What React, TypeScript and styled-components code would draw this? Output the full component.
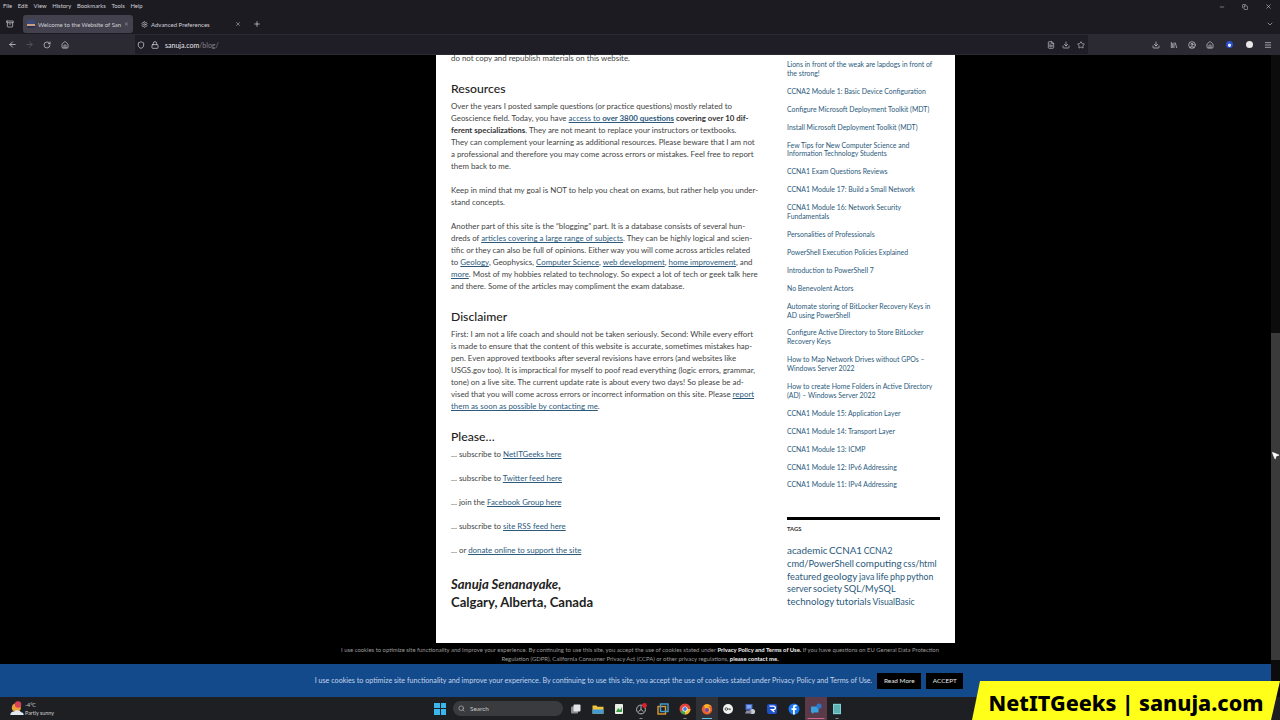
import type { FC, ReactNode } from "react";
import styled, { createGlobalStyle } from "styled-components";
import {
  Archive,
  ArrowLeft,
  ArrowRight,
  ChevronDown,
  Copy,
  Download,
  FileText,
  Home,
  Library,
  Lock,
  Menu,
  Minus,
  MousePointer2,
  Plus,
  RotateCw,
  Search,
  Settings,
  Shield,
  Star,
  UserCircle,
  X,
} from "lucide-react";

const GlobalStyle = createGlobalStyle`
  html, body {
    margin: 0;
    height: 720px;
    overflow: hidden;
    background: #000;
  }
  * {
    box-sizing: border-box;
  }
`;

const Screen = styled.div`
  position: relative;
  width: 1280px;
  height: 720px;
  display: flex;
  flex-direction: column;
  overflow: hidden;
  font-family: "Lato", "Liberation Sans", sans-serif;
  background: #000;
`;

const Chrome = styled.div`
  height: 55px;
  flex: none;
  display: flex;
  flex-direction: column;
  background: #1c1b22;
  color: #d8d8dc;
`;

const MenuRow = styled.div`
  height: 10px;
  flex: none;
  display: flex;
  align-items: center;
  padding-left: 3px;
  gap: 5.6px;
  font-size: 5.9px;
  color: #cfcfd4;
`;

const WindowButtons = styled.div`
  margin-left: auto;
  display: flex;
  align-items: center;
  gap: 17px;
  padding: 3px 8px 0 0;
`;

const TabRow = styled.div`
  height: 24px;
  flex: none;
  display: flex;
  align-items: center;
  padding-top: 4px;
  font-size: 6px;
`;

const TabsIcon = styled.div`
  width: 23px;
  display: flex;
  justify-content: center;
  padding-right: 3px;
  color: #d8d8dc;
`;

const Tab = styled.div<{ $active?: boolean; $w: number }>`
  height: 18px;
  width: ${({ $w }) => $w}px;
  margin-right: 4px;
  display: flex;
  align-items: center;
  gap: 3px;
  padding: 0 4px 0 4px;
  border-radius: 3px;
  background: ${({ $active }) => ($active ? "#42414d" : "transparent")};
  color: #d0d0d6;
  white-space: nowrap;
`;

const TabTitle = styled.span`
  flex: 1;
`;

const Favicon = styled.span`
  width: 8px;
  height: 8px;
  flex: none;
  border-radius: 1px;
  background: linear-gradient(#3a4a78 0 45%, #c8a080 45% 70%, #2a3050 70%);
`;

const NewTab = styled.div`
  margin-left: 4px;
  display: flex;
  color: #e0e0e4;
`;

const ExpandTabs = styled.div`
  margin-left: auto;
  padding-right: 6px;
  display: flex;
  color: #b8b8c0;
`;

const Toolbar = styled.div`
  flex: 1;
  display: flex;
  align-items: center;
  background: #2b2a33;
  padding: 0 3px 0 4px;
`;

const NavButton = styled.div<{ $dim?: boolean; $w?: number }>`
  width: ${({ $w }) => $w ?? 18}px;
  flex: none;
  display: flex;
  justify-content: center;
  color: ${({ $dim }) => ($dim ? "#5e5d66" : "#d8d8dc")};
`;

const UrlBar = styled.div`
  width: 953px;
  height: 19px;
  flex: none;
  margin: 0 59px 0 61px;
  display: flex;
  align-items: center;
  gap: 6px;
  padding: 0 3px 0 2px;
  background: #1f1e26;
  font-size: 7px;
  color: #e6e6ea;
`;

const UrlPath = styled.span`
  color: #85848c;
`;

const UrlActions = styled.div`
  margin-left: auto;
  display: flex;
  gap: 7px;
  color: #c8c8cc;
`;

const BlueDot = styled.span`
  width: 7px;
  height: 7px;
  border-radius: 50%;
  background: radial-gradient(circle at 50% 60%, #dfe6ff 0 25%, #2a4fd0 35%);
`;

const WhiteBlob = styled.span`
  width: 7px;
  height: 7px;
  border-radius: 50%;
  background: #e8e8e8;
`;

const Viewport = styled.div`
  position: relative;
  flex: 1;
  display: flex;
  padding-left: 436px;
  overflow: hidden;
  background: #000;
`;

const Card = styled.div`
  width: 519px;
  height: 588px;
  flex: none;
  display: flex;
  gap: 30px;
  padding: 0 15px;
  overflow: hidden;
  background: #fff;
`;

const Article = styled.article`
  width: 306px;
  flex: none;
  font-size: 7.9px;
  line-height: 12px;
  color: #444;
  white-space: nowrap;
`;

const ScrolledLine = styled.p`
  margin: 0 0 15px;
  line-height: 6px;
`;

const Paragraph = styled.p`
  margin: 0 0 12px;
`;

const Heading = styled.h2`
  margin: 0 0 4px;
  padding-top: 5px;
  font-size: 12.2px;
  line-height: 15px;
  font-weight: 500;
  color: #222;
`;

const A = styled.a`
  color: #2b5a7c;
  text-decoration: underline;
  text-decoration-thickness: 0.5px;
  text-underline-offset: 1px;
`;

const Strong = styled.strong`
  color: #333;
  font-weight: 700;
`;

const Signature = styled.div`
  margin-top: 19px;
  font-size: 13.1px;
  line-height: 18px;
  font-weight: 700;
  color: #222;
`;

const SignatureName = styled.em`
  display: block;
`;

const Sidebar = styled.aside`
  width: 153px;
  flex: none;
  padding-top: 5px;
`;

const PostList = styled.ul`
  list-style: none;
  margin: 0;
  padding: 0;
  display: flex;
  flex-direction: column;
  gap: 8.95px;
`;

const PostItem = styled.li`
  font-size: 6.9px;
  line-height: 8.95px;
  color: #2b5a7c;
  white-space: pre-line;
`;

const TagsRule = styled.div`
  margin-top: 28px;
  height: 3px;
  background: #000;
`;

const TagsTitle = styled.h3`
  margin: 4px 0 11px;
  font-size: 5.8px;
  line-height: 9px;
  font-weight: 700;
  color: #333;
`;

const TagCloud = styled.div`
  color: #2b5a7c;
  white-space: nowrap;
`;

const TagLine = styled.div`
  height: 12.7px;
  font-size: 9px;
  line-height: 12.7px;
`;

const Tag = styled.span<{ $size: number }>`
  font-size: ${({ $size }) => $size}px;
  margin-right: 1.6px;
`;

const Scrollbar = styled.div`
  position: absolute;
  top: 0;
  right: 0;
  bottom: 0;
  width: 9px;
  padding-top: 278px;
  background: #0c0c0c;
`;

const ScrollThumb = styled.div`
  height: 327px;
  background: #3a3a3a;
`;

const CursorMark = styled.div`
  position: absolute;
  left: 1271px;
  top: 396px;
  display: flex;
  color: #fff;
`;

const CookieStack = styled.div`
  position: absolute;
  left: 0;
  right: 9px;
  bottom: 0;
  display: flex;
  flex-direction: column;
`;

const CookieNote = styled.div`
  height: 21px;
  padding: 2px 0 0 9px;
  text-align: center;
  font-size: 5.9px;
  line-height: 9px;
  color: #9a9a9a;
`;

const NoteStrong = styled.b`
  color: #eee;
`;

const CookieBar = styled.div`
  height: 33px;
  display: flex;
  align-items: center;
  justify-content: center;
  gap: 5px;
  padding-left: 7px;
  background: #134a8c;
  font-size: 7.17px;
  color: #c4d4e8;
`;

const CookieButton = styled.button<{ $w: number }>`
  width: ${({ $w }) => $w}px;
  height: 16px;
  padding: 0;
  border: 0;
  background: #000;
  color: #e8e8e8;
  font-family: inherit;
  font-size: 6.4px;
`;

const Taskbar = styled.div`
  height: 23px;
  flex: none;
  display: flex;
  align-items: center;
  background: #1e1f22;
  color: #ddd;
`;

const Weather = styled.div`
  width: 434px;
  flex: none;
  display: flex;
  align-items: center;
  gap: 0;
  padding-left: 9px;
`;

const WeatherText = styled.div`
  font-size: 5.4px;
  line-height: 8px;
  color: #cfcfcf;
`;

const TaskIcons = styled.div`
  display: flex;
  align-items: center;
`;

const WinLogo = styled.div`
  width: 12px;
  height: 12px;
  display: grid;
  grid-template-columns: 1fr 1fr;
  gap: 1px;
`;

const WinPane = styled.span`
  background: #39b6ee;
`;

const SearchPill = styled.div`
  width: 110px;
  height: 15px;
  margin: 0 2px 0 7px;
  display: flex;
  align-items: center;
  gap: 5px;
  padding-left: 5px;
  border-radius: 8px;
  background: #3a3b3e;
  font-size: 6.4px;
  color: #c8c8c8;
`;

const TaskSlot = styled.div<{ $tone?: "plain" | "pink" }>`
  position: relative;
  width: 21.8px;
  height: 23px;
  display: flex;
  align-items: center;
  justify-content: center;
  background: ${({ $tone }) =>
    $tone === "plain" ? "#303136" : $tone === "pink" ? "#5a3a48" : "transparent"};
`;

const TaskMark = styled.span<{ $color: string; $w: number }>`
  position: absolute;
  left: 50%;
  bottom: 1px;
  width: ${({ $w }) => $w}px;
  height: 1px;
  transform: translateX(-50%);
  background: ${({ $color }) => $color};
`;

const Badge = styled.div`
  position: absolute;
  right: 0;
  bottom: 0;
  width: 308px;
  height: 39px;
  display: flex;
  align-items: center;
  justify-content: center;
  padding-top: 3px;
  background: #ffff1a;
  clip-path: polygon(8px 0, 100% 0, calc(100% - 9px) 100%, 0 100%);
  font-family: "Noto Sans", "DejaVu Sans", sans-serif;
  font-size: 21.5px;
  font-weight: 800;
  color: #000;
  white-space: nowrap;
`;

const posts = [
  "Lions in front of the weak are lapdogs in front of\nthe strong!",
  "CCNA2 Module 1: Basic Device Configuration",
  "Configure Microsoft Deployment Toolkit (MDT)",
  "Install Microsoft Deployment Toolkit (MDT)",
  "Few Tips for New Computer Science and\nInformation Technology Students",
  "CCNA1 Exam Questions Reviews",
  "CCNA1 Module 17: Build a Small Network",
  "CCNA1 Module 16: Network Security\nFundamentals",
  "Personalities of Professionals",
  "PowerShell Execution Policies Explained",
  "Introduction to PowerShell 7",
  "No Benevolent Actors",
  "Automate storing of BitLocker Recovery Keys in\nAD using PowerShell",
  "Configure Active Directory to Store BitLocker\nRecovery Keys",
  "How to Map Network Drives without GPOs –\nWindows Server 2022",
  "How to create Home Folders in Active Directory\n(AD) – Windows Server 2022",
  "CCNA1 Module 15: Application Layer",
  "CCNA1 Module 14: Transport Layer",
  "CCNA1 Module 13: ICMP",
  "CCNA1 Module 12: IPv6 Addressing",
  "CCNA1 Module 11: IPv4 Addressing",
];

const tagLines: [string, number][][] = [
  [["academic", 9.9], ["CCNA1", 9.9], ["CCNA2", 8.6]],
  [["cmd/PowerShell", 9.3], ["computing", 9.9], ["css/html", 8.9]],
  [["featured", 9.3], ["geology", 10], ["java", 8.9], ["life", 9.3], ["php", 8.9], ["python", 8.6]],
  [["server", 9], ["society", 9.3], ["SQL/MySQL", 9.3]],
  [["technology", 9.7], ["tutorials", 9.7], ["VisualBasic", 8.6]],
];

// small hand drawn taskbar apps, left to right
const Glyph: FC<{ children: ReactNode; size?: number }> = ({ children, size = 12 }) => (
  <svg width={size} height={size} viewBox="0 0 12 12">
    {children}
  </svg>
);

const taskApps: { glyph: ReactNode; tone?: "plain" | "pink"; mark?: [string, number] }[] = [
  {
    glyph: (
      <Glyph>
        <rect x="1" y="3.5" width="7" height="7" rx="1" fill="#8a8c90" />
        <rect x="3.5" y="1.5" width="7" height="7" rx="1" fill="#e4e4e6" />
      </Glyph>
    ),
  },
  {
    glyph: (
      <Glyph>
        <path d="M0.5 2.5h4l1 1.2h6v7h-11z" fill="#f2c33c" />
        <rect x="0.5" y="6.5" width="11" height="4.2" fill="#3f9ad6" />
      </Glyph>
    ),
  },
  {
    glyph: (
      <Glyph>
        <rect x="2" y="1" width="8" height="10" rx="0.8" fill="#e8efe6" />
        <path d="M3 9l2-4 2 2 2-3v5z" fill="#3f9a48" />
      </Glyph>
    ),
  },
  {
    mark: ["#888", 3],
    glyph: (
      <Glyph>
        <circle cx="6" cy="6.5" r="4.4" fill="none" stroke="#c8c8c8" strokeWidth="0.9" />
        <path d="M6 6.5L3.5 8.5M6 6.5l2.4 2M6 6.5V3.2" stroke="#c8c8c8" strokeWidth="0.9" />
        <circle cx="9.5" cy="2.5" r="2.4" fill="#e0202c" />
      </Glyph>
    ),
  },
  {
    glyph: (
      <Glyph>
        <rect x="1" y="3.5" width="7.5" height="7.5" fill="none" stroke="#e09a30" strokeWidth="1.4" />
        <rect x="3.5" y="1" width="7.5" height="7.5" fill="none" stroke="#3fa0d8" strokeWidth="1.4" />
      </Glyph>
    ),
  },
  {
    mark: ["#888", 3],
    glyph: (
      <Glyph>
        <circle cx="6" cy="6" r="5.5" fill="#e0463a" />
        <path d="M6 6L1.2 8.8A5.5 5.5 0 0 0 6 11.5z" fill="#3ea650" />
        <path d="M6 6l0 5.5A5.5 5.5 0 0 0 11.5 6z" fill="#f3c030" />
        <circle cx="6" cy="6" r="2.6" fill="#fff" />
        <circle cx="6" cy="6" r="1.9" fill="#3a7de0" />
      </Glyph>
    ),
  },
  {
    tone: "plain",
    mark: ["#5cc4ea", 10],
    glyph: (
      <Glyph>
        <circle cx="6" cy="6.3" r="5.2" fill="#e8612c" />
        <path d="M3 2.5C5 .5 9 .8 10.8 4 9 3 7.5 3.2 6.8 4c2 .3 3 2 2.4 3.8-.8 1.6-3 2-4.4 1C3.6 7.8 3.6 6.5 4 5.6z" fill="#f7b32c" />
        <circle cx="6" cy="7" r="2" fill="#7a3fb8" />
      </Glyph>
    ),
  },
  {
    glyph: (
      <Glyph>
        <circle cx="6" cy="6" r="5" fill="#f2f2f2" />
        <circle cx="4.3" cy="6" r="1.3" fill="none" stroke="#333" strokeWidth="0.8" />
        <path d="M5.6 6h3.2M8 6v1.2" stroke="#333" strokeWidth="0.8" />
      </Glyph>
    ),
  },
  {
    glyph: (
      <Glyph>
        <rect x="1.5" y="1" width="7" height="6" fill="#3b5fc0" />
        <rect x="2.5" y="2" width="5" height="3.6" fill="#7fa6ea" />
        <circle cx="8.5" cy="8.5" r="2.6" fill="#c8ccd4" />
        <path d="M1 10.5l1.5-3h5v3z" fill="#8a90a0" />
      </Glyph>
    ),
  },
  {
    glyph: (
      <Glyph>
        <rect x="1" y="1" width="10" height="10" rx="2" fill="#1e50c8" />
        <path d="M3.5 3.2h4.2a1.7 1.7 0 0 1 0 3.4H5.6l2.8 2.3" fill="none" stroke="#fff" strokeWidth="1.3" />
      </Glyph>
    ),
  },
  {
    glyph: (
      <Glyph>
        <circle cx="6" cy="6" r="5.5" fill="#1877f2" />
        <path d="M6.8 11.5V7h1.5l.3-1.7H6.8V4.3c0-.6.3-.9.9-.9h.9V1.9C8.2 1.8 7.7 1.8 7.2 1.8 5.9 1.8 5 2.6 5 4.1v1.2H3.5V7H5v4.5z" fill="#fff" />
      </Glyph>
    ),
  },
  {
    tone: "pink",
    mark: ["#d06a88", 17],
    glyph: (
      <Glyph>
        <path d="M1 3.5h7.5v6H4L2.2 11V9.5H1z" fill="#3aa0e0" />
        <circle cx="9" cy="3" r="2.6" fill="#2a78c8" />
      </Glyph>
    ),
  },
  {
    mark: ["#888", 3],
    glyph: (
      <Glyph>
        <rect x="2" y="0.8" width="8" height="10.4" fill="#7fd0d0" />
        <path d="M3 3h6M3 5h6M3 7h6M3 9h6" stroke="#2a7a88" strokeWidth="0.7" />
      </Glyph>
    ),
  },
];

const App: FC = () => (
  <Screen>
    <GlobalStyle />
    <Chrome>
      <MenuRow>
        <span>File</span>
        <span>Edit</span>
        <span>View</span>
        <span>History</span>
        <span>Bookmarks</span>
        <span>Tools</span>
        <span>Help</span>
        <WindowButtons>
          <Minus size={6} />
          <Copy size={6} />
          <X size={7} />
        </WindowButtons>
      </MenuRow>
      <TabRow>
        <TabsIcon>
          <Archive size={8} />
        </TabsIcon>
        <Tab $active $w={110}>
          <Favicon />
          <TabTitle>Welcome to the Website of San</TabTitle>
          <X size={6} />
        </Tab>
        <Tab $w={108}>
          <Settings size={7} />
          <TabTitle>Advanced Preferences</TabTitle>
          <X size={6} />
        </Tab>
        <NewTab>
          <Plus size={8} />
        </NewTab>
        <ExpandTabs>
          <ChevronDown size={8} />
        </ExpandTabs>
      </TabRow>
      <Toolbar>
        <NavButton $w={16}>
          <ArrowLeft size={9} />
        </NavButton>
        <NavButton $dim>
          <ArrowRight size={9} />
        </NavButton>
        <NavButton>
          <RotateCw size={8} />
        </NavButton>
        <NavButton>
          <Home size={8} />
        </NavButton>
        <UrlBar>
          <Shield size={8} />
          <Lock size={8} />
          <span>
            sanuja.com<UrlPath>/blog/</UrlPath>
          </span>
          <UrlActions>
            <FileText size={8} />
            <Download size={8} />
            <Star size={8} />
          </UrlActions>
        </UrlBar>
        <NavButton>
          <Download size={8} />
        </NavButton>
        <NavButton>
          <Library size={8} />
        </NavButton>
        <NavButton>
          <UserCircle size={8} />
        </NavButton>
        <NavButton>
          <Home size={8} />
        </NavButton>
        <NavButton $w={20}>
          <BlueDot />
        </NavButton>
        <NavButton $w={20}>
          <WhiteBlob />
        </NavButton>
        <NavButton>
          <Menu size={8} />
        </NavButton>
      </Toolbar>
    </Chrome>

    <Viewport>
      <Card>
        <Article>
          <ScrolledLine>do not copy and republish materials on this website.</ScrolledLine>
          <Heading>Resources</Heading>
          <Paragraph>
            Over the years I posted sample questions (or practice questions) mostly related to
            <br />
            Geoscience field. Today, you have <A>access to <b>over 3800 questions</b></A>{" "}
            <Strong>covering over 10 dif-</Strong>
            <br />
            <Strong>ferent specializations</Strong>. They are not meant to replace your instructors or textbooks.
            <br />
            They can complement your learning as additional resources. Please beware that I am not
            <br />
            a professional and therefore you may come across errors or mistakes. Feel free to report
            <br />
            them back to me.
          </Paragraph>
          <Paragraph>
            Keep in mind that my goal is NOT to help you cheat on exams, but rather help you under-
            <br />
            stand concepts.
          </Paragraph>
          <Paragraph>
            Another part of this site is the “blogging” part. It is a database consists of several hun-
            <br />
            dreds of <A>articles covering a large range of subjects</A>. They can be highly logical and scien-
            <br />
            tific or they can also be full of opinions. Either way you will come across articles related
            <br />
            to <A>Geology</A>, Geophysics, <A>Computer Science</A>, <A>web development</A>, <A>home improvement</A>, and
            <br />
            <A>more</A>. Most of my hobbies related to technology. So expect a lot of tech or geek talk here
            <br />
            and there. Some of the articles may compliment the exam database.
          </Paragraph>
          <Heading>Disclaimer</Heading>
          <Paragraph>
            First: I am not a life coach and should not be taken seriously. Second: While every effort
            <br />
            is made to ensure that the content of this website is accurate, sometimes mistakes hap-
            <br />
            pen. Even approved textbooks after several revisions have errors (and websites like
            <br />
            USGS.gov too). It is impractical for myself to poof read everything (logic errors, grammar,
            <br />
            tone) on a live site. The current update rate is about every two days! So please be ad-
            <br />
            vised that you will come across errors or incorrect information on this site. Please <A>report</A>
            <br />
            <A>them as soon as possible by contacting me</A>.
          </Paragraph>
          <Heading>Please…</Heading>
          <Paragraph>… subscribe to <A>NetITGeeks here</A></Paragraph>
          <Paragraph>… subscribe to <A>Twitter feed here</A></Paragraph>
          <Paragraph>… join the <A>Facebook Group here</A></Paragraph>
          <Paragraph>… subscribe to <A>site RSS feed here</A></Paragraph>
          <Paragraph>… or <A>donate online to support the site</A></Paragraph>
          <Signature>
            <SignatureName>Sanuja Senanayake,</SignatureName>
            Calgary, Alberta, Canada
          </Signature>
        </Article>
        <Sidebar>
          <PostList>
            {posts.map((post) => (
              <PostItem key={post}>{post}</PostItem>
            ))}
          </PostList>
          <TagsRule />
          <TagsTitle>TAGS</TagsTitle>
          <TagCloud>
            {tagLines.map((line) => (
              <TagLine key={line[0][0]}>
                {line.map(([name, size]) => (
                  <Tag key={name} $size={size}>
                    {name}
                  </Tag>
                ))}
              </TagLine>
            ))}
          </TagCloud>
        </Sidebar>
      </Card>

      <CookieStack>
        <CookieNote>
          I use cookies to optimize site functionality and improve your experience. By continuing to use this site, you accept the use of cookies stated under{" "}
          <NoteStrong>Privacy Policy and Terms of Use.</NoteStrong> If you have questions on EU General Data Protection
          <br />
          Regulation (GDPR), California Consumer Privacy Act (CCPA) or other privacy regulations, <NoteStrong>please contact me.</NoteStrong>
        </CookieNote>
        <CookieBar>
          <span>
            I use cookies to optimize site functionality and improve your experience. By continuing to use this site, you accept the use of cookies stated under Privacy Policy and Terms of Use.
          </span>
          <CookieButton $w={44}>Read More</CookieButton>
          <CookieButton $w={37}>ACCEPT</CookieButton>
        </CookieBar>
      </CookieStack>

      <Scrollbar>
        <ScrollThumb />
      </Scrollbar>
      <CursorMark>
        <MousePointer2 size={9} fill="#fff" />
      </CursorMark>
    </Viewport>

    <Taskbar>
      <Weather>
        <Glyph size={16}>
          <circle cx="5.5" cy="5" r="3.4" fill="#eba23c" />
          <path d="M1 10.5c0-2 1.5-3 3-2.6C4.6 6.4 8.5 6.5 9 8.4c1.4 0 2 1 2 2.1z" fill="#e2e8f0" />
          <circle cx="6.8" cy="2.6" r="2.4" fill="#d8405a" />
        </Glyph>
        <WeatherText>
          -4°C
          <br />
          Partly sunny
        </WeatherText>
      </Weather>
      <TaskIcons>
        <WinLogo>
          <WinPane />
          <WinPane />
          <WinPane />
          <WinPane />
        </WinLogo>
        <SearchPill>
          <Search size={7} />
          Search
        </SearchPill>
        {taskApps.map((app, index) => (
          <TaskSlot key={index} $tone={app.tone}>
            {app.glyph}
            {app.mark && <TaskMark $color={app.mark[0]} $w={app.mark[1]} />}
          </TaskSlot>
        ))}
      </TaskIcons>
    </Taskbar>

    <Badge>NetITGeeks | sanuja.com</Badge>
  </Screen>
);

export default App;
